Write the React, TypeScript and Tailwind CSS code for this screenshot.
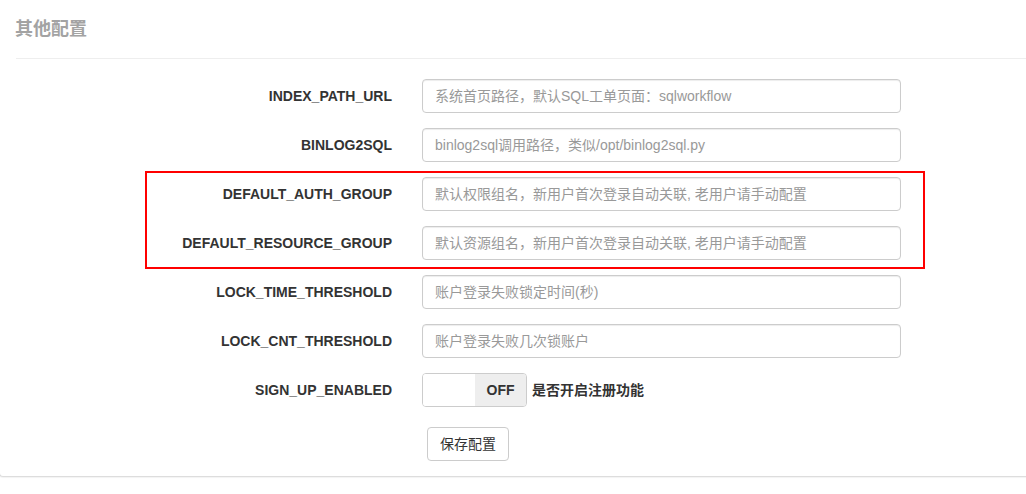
const font = '[font-family:"Liberation_Sans","Noto_Sans_CJK_SC",Arial,sans-serif]'

const rows = [
  { key: 'INDEX_PATH_URL', hint: '系统首页路径，默认SQL工单页面：sqlworkflow' },
  { key: 'BINLOG2SQL', hint: 'binlog2sql调用路径，类似/opt/binlog2sql.py' },
  { key: 'DEFAULT_AUTH_GROUP', hint: '默认权限组名，新用户首次登录自动关联, 老用户请手动配置' },
  { key: 'DEFAULT_RESOURCE_GROUP', hint: '默认资源组名，新用户首次登录自动关联, 老用户请手动配置' },
  { key: 'LOCK_TIME_THRESHOLD', hint: '账户登录失败锁定时间(秒)' },
  { key: 'LOCK_CNT_THRESHOLD', hint: '账户登录失败几次锁账户' },
]

function Label({ children }: { children: React.ReactNode }) {
  return (
    <label className="w-[392px] shrink-0 text-right text-[14px] font-bold text-[#333]">
      {children}
    </label>
  )
}

export default function App() {
  return (
    <div className={`relative h-[494px] w-[1026px] overflow-hidden bg-white ${font}`}>
      <div className="h-[477px] w-[1060px] rounded-bl-[4px] border-b border-l border-[#ddd] shadow-[0_1px_1px_rgba(0,0,0,0.05)] -ml-px bg-white">
        {/* header */}
        <div className="h-[58px] px-[15px] pt-[19px]">
          <h4 className="text-[18px] font-bold leading-[20px] text-[#a3a3a3]">其他配置</h4>
        </div>
        <div className="ml-[16px] border-t border-[#eee]" />

        <div className="flex flex-col gap-[15px] pt-[20px]">
          {rows.map((r) => (
            <div key={r.key} className="flex items-center">
              <Label>{r.key}</Label>
              <input
                className="ml-[30px] h-[34px] w-[479px] rounded-[4px] border border-[#ccc] px-[12px] text-[14px] text-[#555] shadow-[inset_0_1px_1px_rgba(0,0,0,0.075)] outline-none placeholder:text-[#999]"
                placeholder={r.hint}
              />
            </div>
          ))}

          <div className="flex items-center">
            <Label>SIGN_UP_ENABLED</Label>
            <div className="ml-[30px] flex h-[34px] w-[105px] overflow-hidden rounded-[4px] border border-[#ccc]">
              <span className="w-[52px] bg-white" />
              <span className="flex flex-1 items-center justify-center bg-[#eee] text-[14px] font-bold text-[#333]">
                OFF
              </span>
            </div>
            <span className="ml-[5px] text-[14px] font-bold text-[#333]">是否开启注册功能</span>
          </div>

          <div className="flex pt-[5px]">
            <button className="ml-[427px] h-[34px] w-[82px] rounded-[4px] border border-[#ccc] bg-white text-[14px] text-[#333]">
              保存配置
            </button>
          </div>
        </div>
      </div>

      {/* annotation box drawn over the form */}
      <div className="pointer-events-none absolute left-[145px] top-[171px] h-[98px] w-[780px] border-2 border-[#ff0000]" />
    </div>
  )
}
